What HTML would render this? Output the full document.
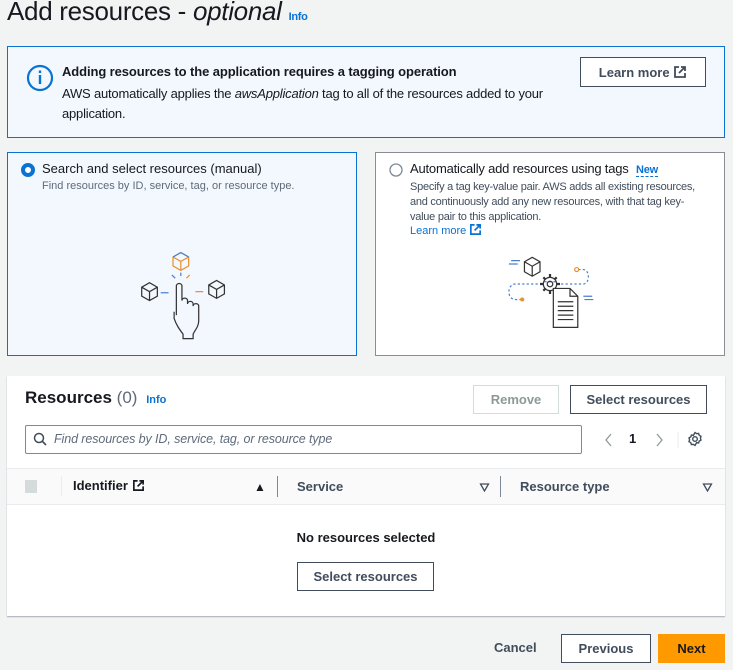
<!DOCTYPE html>
<html><head><meta charset="utf-8"><style>
*{box-sizing:border-box;margin:0;padding:0}
body{width:733px;height:670px;background:#f2f3f3;font-family:"Liberation Sans",sans-serif;color:#16191f;position:relative;overflow:hidden;font-size:13px}
.a{position:absolute}
.h1{left:7px;top:-4px;font-size:26px;white-space:nowrap;letter-spacing:-0.3px}
.info{color:#0972d3;font-weight:bold;font-size:11px}
.btn{position:absolute;border:1px solid #414d5c;background:#fff;font-weight:bold;font-size:13px;display:flex;align-items:center;justify-content:center;color:#414d5c}
.gray{color:#5f6b7a}
</style></head><body>
<div class="a h1">Add resources - <i>optional</i> <span class="info">Info</span></div>

<div class="a" style="left:7px;top:46px;width:718px;height:92px;background:#f2f8fd;border:1px solid #0972d3"></div>
<svg class="a" style="left:26px;top:64px" width="28" height="28" viewBox="0 0 28 28"><circle cx="14" cy="14" r="12" fill="none" stroke="#0972d3" stroke-width="2.2"/><rect x="12.8" y="11" width="2.4" height="9" fill="#0972d3"/><rect x="12.8" y="6.5" width="2.4" height="2.6" fill="#0972d3"/></svg>
<div class="a" style="left:62px;top:64px;font-weight:bold;font-size:13px;white-space:nowrap;letter-spacing:-0.1px">Adding resources to the application requires a tagging operation</div>
<div class="a" style="left:62px;top:84px;width:520px;font-size:13px;line-height:20px;letter-spacing:-0.2px">AWS automatically applies the <i>awsApplication</i> tag to all of the resources added to your application.</div>
<div class="btn" style="left:580px;top:57px;width:126px;height:30px">Learn more&nbsp;<svg width="14" height="14" viewBox="0 0 14 14"><path d="M6 2H2v10h10V8M8 2h4v4M12 2L6 8" fill="none" stroke="#414d5c" stroke-width="1.8"/></svg></div>

<div class="a" style="left:7px;top:152px;width:350px;height:204px;background:#f2f8fd;border:1px solid #0972d3"></div>
<svg class="a" style="left:21px;top:163px" width="14" height="14"><circle cx="7" cy="7" r="5" fill="#fff" stroke="#0972d3" stroke-width="4"/></svg>
<div class="a" style="left:42px;top:161px;font-size:13px">Search and select resources (manual)</div>
<div class="a gray" style="left:42px;top:180px;font-size:11px">Find resources by ID, service, tag, or resource type.</div>
<svg class="a" style="left:135px;top:250px" width="95" height="90" viewBox="0 0 85 80" fill="none" stroke-width="1.1">
<g stroke="#333"><path d="M6 33l7-4 7 4v8l-7 4-7-4zM6 33l7 4 7-4M13 37v8"/><path d="M66 31l7-4 7 4v8l-7 4-7-4zM66 31l7 4 7-4M73 35v8"/></g>
<path d="M34 6l7-4 7 4v8l-7 4-7-4zM34 6l7 4 7-4M41 10v8" stroke="#e8912f"/><path d="M34 6l7-4 7 4" stroke="#4b80d1"/>
<path d="M23 38h7" stroke="#4b80d1"/><path d="M54 37h7" stroke="#e8912f"/><path d="M36 25l-3-3M41 23v-3" stroke="#4b80d1"/><path d="M46 25l3-3" stroke="#e8912f"/>
<path d="M37 58V32c0-3 5-3 5 0v13c0-3 5-3 5 0v3c0-3 5-3 5 0v2c0-3 5-3 5 0v13c0 5-3 8-5 12v4H43v-4c-3-4-6-8-8-14v-6" stroke="#333"/>
</svg>

<div class="a" style="left:375px;top:152px;width:350px;height:204px;background:#fff;border:1px solid #8c8c94"></div>
<svg class="a" style="left:389px;top:163px" width="14" height="14"><circle cx="7" cy="7" r="6" fill="#fff" stroke="#7d8998" stroke-width="1.3"/></svg>
<div class="a" style="left:410px;top:161px;font-size:13px;white-space:nowrap;letter-spacing:-0.2px">Automatically add resources using tags <span class="info" style="font-size:11px;border-bottom:1px dashed #0972d3;margin-left:4px">New</span></div>
<div class="a" style="left:410px;top:180px;width:298px;font-size:11px;line-height:15px;color:#414d5c;letter-spacing:-0.25px">Specify a tag key-value pair. AWS adds all existing resources, and continuously add any new resources, with that tag key-value pair to this application.</div>
<div class="a" style="left:410px;top:223px;font-size:11px;color:#0972d3">Learn more <svg width="13" height="13" viewBox="0 0 14 14" style="vertical-align:-2px"><path d="M6 2H2v10h10V8M8 2h4v4M12 2L6 8" fill="none" stroke="#0972d3" stroke-width="1.8"/></svg></div>
<svg class="a" style="left:500px;top:255px" width="100" height="78" viewBox="0 0 90 70" fill="none" stroke-width="1.1">
<path d="M10 5h8M8 8h8M75 37h8M76 40h8" stroke="#4b80d1"/>
<path d="M22 6l7-4 7 4v9l-7 4-7-4zM22 6l7 4 7-4M29 10v9" stroke="#333"/>
<path d="M40 24h10M34 26H14c-8 0-8 14 0 14h5" stroke="#4b80d1" stroke-dasharray="2 2"/>
<path d="M55 26h20c6 0 6-13 0-13h-5" stroke="#4b80d1" stroke-dasharray="2 2"/>
<circle cx="20" cy="40" r="1.8" fill="#e8912f" stroke="none"/><circle cx="69" cy="13" r="1.8" stroke="#e8912f"/>
<circle cx="45" cy="26" r="6" stroke="#333"/><circle cx="45" cy="26" r="2.5" stroke="#333"/>
<path d="M45 17v3M45 32v3M36 26h3M51 26h3M39 20l2 2M49 30l2 2M39 32l2-2M49 22l2-2" stroke="#333" stroke-width="2"/>
<path d="M48 30h15l7 7v28H48z M63 30v7h7M52 42h14M52 46h14M52 50h14M52 54h14M52 58h14" stroke="#333" fill="#fff"/>
</svg>

<div class="a" style="left:7px;top:376px;width:718px;height:240px;background:#fff;box-shadow:0 1px 1px #aab"></div>
<div class="a" style="left:25px;top:388px;font-size:17px;font-weight:bold;white-space:nowrap">Resources <span style="font-weight:normal;color:#5f6b7a">(0)</span> <span class="info" style="font-size:11px;margin-left:4px">Info</span></div>
<div class="btn" style="left:473px;top:385px;width:86px;height:29px;border-color:#d5dbdb;color:#8d9999">Remove</div>
<div class="btn" style="left:570px;top:385px;width:137px;height:29px">Select resources</div>
<div class="a" style="left:25px;top:425px;width:557px;height:29px;border:1px solid #7d8998;border-radius:2px"></div>
<svg class="a" style="left:33px;top:432px" width="14" height="14"><circle cx="6" cy="6" r="4.5" fill="none" stroke="#414d5c" stroke-width="1.5"/><path d="M9.5 9.5l3.5 3.5" stroke="#414d5c" stroke-width="1.6"/></svg>
<div class="a" style="left:54px;top:432px;font-size:12.5px;font-style:italic;color:#5f6b7a;letter-spacing:-0.1px">Find resources by ID, service, tag, or resource type</div>
<svg class="a" style="left:602px;top:432px" width="80" height="16"><path d="M9 2L4 8l5 6" fill="none" stroke="#8d9999" stroke-width="1.3"/><path d="M55 2l5 6-5 6" fill="none" stroke="#8d9999" stroke-width="1.3"/><path d="M76 -4v24" stroke="#e9ebed"/></svg>
<div class="a" style="left:629px;top:431px;font-weight:bold;font-size:13px">1</div>
<svg class="a" style="left:687px;top:431px" width="16" height="16" viewBox="0 0 16 16"><path d="M8 1.5l1.6 1.2 2-.3.6 1.9 1.8 1-.6 1.9.6 1.9-1.8 1-.6 1.9-2-.3L8 14.5l-1.6-1.2-2 .3-.6-1.9-1.8-1 .6-1.9-.6-1.9 1.8-1 .6-1.9 2 .3z" fill="none" stroke="#414d5c" stroke-width="1.4"/><circle cx="8" cy="8" r="2.3" fill="none" stroke="#414d5c" stroke-width="1.4"/></svg>

<div class="a" style="left:7px;top:468px;width:718px;height:37px;background:#fafafa;border-top:1px solid #e9ebed;border-bottom:1px solid #e9ebed"></div>
<div class="a" style="left:25px;top:480px;width:12px;height:13px;background:#d5dbdb"></div>
<div class="a" style="left:61px;top:476px;width:1px;height:20px;background:#e9ebed"></div>
<div class="a" style="left:73px;top:478px;font-weight:bold;font-size:13px">Identifier <svg width="13" height="13" viewBox="0 0 14 14" style="vertical-align:-2px"><path d="M6 2H2v10h10V8M8 2h4v4M12 2L6 8" fill="none" stroke="#16191f" stroke-width="1.8"/></svg></div>
<div class="a" style="left:254px;top:480px;font-size:12px">▲</div>
<div class="a" style="left:277px;top:476px;width:1px;height:21px;background:#7d8998"></div>
<div class="a" style="left:297px;top:479px;font-weight:bold;font-size:13px;color:#414d5c">Service</div>
<svg class="a" style="left:479px;top:482px" width="11" height="10"><path d="M1.5 2h8L5.5 9z" fill="none" stroke="#414d5c" stroke-width="1.3"/></svg>
<div class="a" style="left:500px;top:476px;width:1px;height:21px;background:#7d8998"></div>
<div class="a" style="left:520px;top:479px;font-weight:bold;font-size:13px;color:#414d5c">Resource type</div>
<svg class="a" style="left:702px;top:482px" width="11" height="10"><path d="M1.5 2h8L5.5 9z" fill="none" stroke="#414d5c" stroke-width="1.3"/></svg>
<div class="a" style="left:7px;top:530px;width:718px;text-align:center;font-weight:bold;font-size:13px">No resources selected</div>
<div class="btn" style="left:297px;top:562px;width:137px;height:29px">Select resources</div>

<div class="a" style="left:494px;top:640px;font-weight:bold;font-size:13px;color:#414d5c">Cancel</div>
<div class="btn" style="left:561px;top:634px;width:90px;height:29px">Previous</div>
<div class="btn" style="left:658px;top:634px;width:67px;height:29px;background:#ff9900;border-color:#ff9900;color:#16191f">Next</div>
</body></html>
